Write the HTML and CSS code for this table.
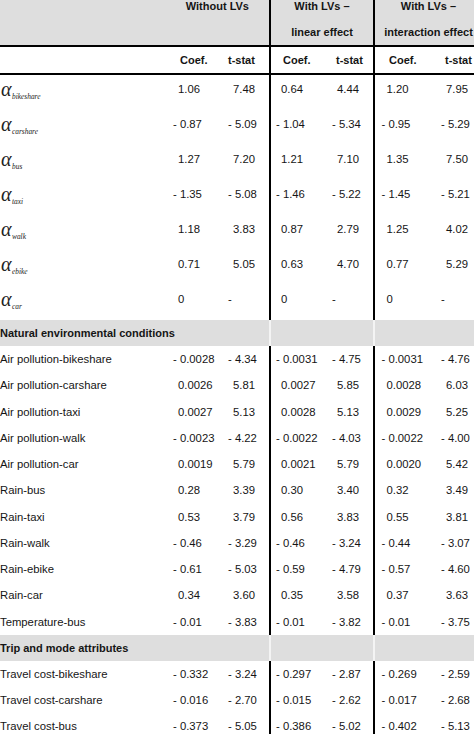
FILE: index.html
```html
<!DOCTYPE html>
<html>
<head>
<meta charset="utf-8">
<link rel="stylesheet" href="styles.css">
</head>
<body>
<div class="table">
  <div class="row head">
    <div class="lab"></div>
    <div class="h1"><div class="htext">Without LVs</div></div>
    <div class="h2"><div class="htext">With LVs –<br>linear effect</div></div>
    <div class="h3"><div class="htext">With LVs –<br>interaction effect</div></div>
  </div>
  <div class="row sub">
    <div class="lab"></div>
    <div class="c1 hc">Coef.</div><div class="t1 ht">t-stat</div>
    <div class="c2 hc">Coef.</div><div class="t2 ht">t-stat</div>
    <div class="c3 hc">Coef.</div><div class="t3 ht">t-stat</div>
  </div>

  <div class="row alpha">
    <div class="lab"><span class="al">α</span><sub>bikeshare</sub></div>
    <div class="c1">1.06</div><div class="t1">7.48</div>
    <div class="c2">0.64</div><div class="t2">4.44</div>
    <div class="c3">1.20</div><div class="t3">7.95</div>
  </div>
  <div class="row alpha">
    <div class="lab"><span class="al">α</span><sub>carshare</sub></div>
    <div class="c1"><span class="neg">- 0.87</span></div><div class="t1"><span class="neg">- 5.09</span></div>
    <div class="c2"><span class="neg">- 1.04</span></div><div class="t2"><span class="neg">- 5.34</span></div>
    <div class="c3"><span class="neg">- 0.95</span></div><div class="t3"><span class="neg">- 5.29</span></div>
  </div>
  <div class="row alpha">
    <div class="lab"><span class="al">α</span><sub>bus</sub></div>
    <div class="c1">1.27</div><div class="t1">7.20</div>
    <div class="c2">1.21</div><div class="t2">7.10</div>
    <div class="c3">1.35</div><div class="t3">7.50</div>
  </div>
  <div class="row alpha">
    <div class="lab"><span class="al">α</span><sub>taxi</sub></div>
    <div class="c1"><span class="neg">- 1.35</span></div><div class="t1"><span class="neg">- 5.08</span></div>
    <div class="c2"><span class="neg">- 1.46</span></div><div class="t2"><span class="neg">- 5.22</span></div>
    <div class="c3"><span class="neg">- 1.45</span></div><div class="t3"><span class="neg">- 5.21</span></div>
  </div>
  <div class="row alpha">
    <div class="lab"><span class="al">α</span><sub>walk</sub></div>
    <div class="c1">1.18</div><div class="t1">3.83</div>
    <div class="c2">0.87</div><div class="t2">2.79</div>
    <div class="c3">1.25</div><div class="t3">4.02</div>
  </div>
  <div class="row alpha">
    <div class="lab"><span class="al">α</span><sub>ebike</sub></div>
    <div class="c1">0.71</div><div class="t1">5.05</div>
    <div class="c2">0.63</div><div class="t2">4.70</div>
    <div class="c3">0.77</div><div class="t3">5.29</div>
  </div>
  <div class="row alpha">
    <div class="lab"><span class="al">α</span><sub>car</sub></div>
    <div class="c1">0</div><div class="t1"><span class="neg">-</span></div>
    <div class="c2">0</div><div class="t2"><span class="neg">-</span></div>
    <div class="c3">0</div><div class="t3"><span class="neg">-</span></div>
  </div>

  <div class="row band">
    <div class="blab">Natural environmental conditions</div>
    <div class="b2"></div><div class="b3"></div>
  </div>

  <div class="row">
    <div class="lab">Air pollution-bikeshare</div>
    <div class="c1"><span class="neg">- 0.0028</span></div><div class="t1"><span class="neg">- 4.34</span></div>
    <div class="c2"><span class="neg">- 0.0031</span></div><div class="t2"><span class="neg">- 4.75</span></div>
    <div class="c3"><span class="neg">- 0.0031</span></div><div class="t3"><span class="neg">- 4.76</span></div>
  </div>
  <div class="row">
    <div class="lab">Air pollution-carshare</div>
    <div class="c1">0.0026</div><div class="t1">5.81</div>
    <div class="c2">0.0027</div><div class="t2">5.85</div>
    <div class="c3">0.0028</div><div class="t3">6.03</div>
  </div>
  <div class="row">
    <div class="lab">Air pollution-taxi</div>
    <div class="c1">0.0027</div><div class="t1">5.13</div>
    <div class="c2">0.0028</div><div class="t2">5.13</div>
    <div class="c3">0.0029</div><div class="t3">5.25</div>
  </div>
  <div class="row">
    <div class="lab">Air pollution-walk</div>
    <div class="c1"><span class="neg">- 0.0023</span></div><div class="t1"><span class="neg">- 4.22</span></div>
    <div class="c2"><span class="neg">- 0.0022</span></div><div class="t2"><span class="neg">- 4.03</span></div>
    <div class="c3"><span class="neg">- 0.0022</span></div><div class="t3"><span class="neg">- 4.00</span></div>
  </div>
  <div class="row">
    <div class="lab">Air pollution-car</div>
    <div class="c1">0.0019</div><div class="t1">5.79</div>
    <div class="c2">0.0021</div><div class="t2">5.79</div>
    <div class="c3">0.0020</div><div class="t3">5.42</div>
  </div>
  <div class="row">
    <div class="lab">Rain-bus</div>
    <div class="c1">0.28</div><div class="t1">3.39</div>
    <div class="c2">0.30</div><div class="t2">3.40</div>
    <div class="c3">0.32</div><div class="t3">3.49</div>
  </div>
  <div class="row">
    <div class="lab">Rain-taxi</div>
    <div class="c1">0.53</div><div class="t1">3.79</div>
    <div class="c2">0.56</div><div class="t2">3.83</div>
    <div class="c3">0.55</div><div class="t3">3.81</div>
  </div>
  <div class="row">
    <div class="lab">Rain-walk</div>
    <div class="c1"><span class="neg">- 0.46</span></div><div class="t1"><span class="neg">- 3.29</span></div>
    <div class="c2"><span class="neg">- 0.46</span></div><div class="t2"><span class="neg">- 3.24</span></div>
    <div class="c3"><span class="neg">- 0.44</span></div><div class="t3"><span class="neg">- 3.07</span></div>
  </div>
  <div class="row">
    <div class="lab">Rain-ebike</div>
    <div class="c1"><span class="neg">- 0.61</span></div><div class="t1"><span class="neg">- 5.03</span></div>
    <div class="c2"><span class="neg">- 0.59</span></div><div class="t2"><span class="neg">- 4.79</span></div>
    <div class="c3"><span class="neg">- 0.57</span></div><div class="t3"><span class="neg">- 4.60</span></div>
  </div>
  <div class="row">
    <div class="lab">Rain-car</div>
    <div class="c1">0.34</div><div class="t1">3.60</div>
    <div class="c2">0.35</div><div class="t2">3.58</div>
    <div class="c3">0.37</div><div class="t3">3.63</div>
  </div>
  <div class="row">
    <div class="lab">Temperature-bus</div>
    <div class="c1"><span class="neg">- 0.01</span></div><div class="t1"><span class="neg">- 3.83</span></div>
    <div class="c2"><span class="neg">- 0.01</span></div><div class="t2"><span class="neg">- 3.82</span></div>
    <div class="c3"><span class="neg">- 0.01</span></div><div class="t3"><span class="neg">- 3.75</span></div>
  </div>

  <div class="row band">
    <div class="blab">Trip and mode attributes</div>
    <div class="b2"></div><div class="b3"></div>
  </div>

  <div class="row">
    <div class="lab">Travel cost-bikeshare</div>
    <div class="c1"><span class="neg">- 0.332</span></div><div class="t1"><span class="neg">- 3.24</span></div>
    <div class="c2"><span class="neg">- 0.297</span></div><div class="t2"><span class="neg">- 2.87</span></div>
    <div class="c3"><span class="neg">- 0.269</span></div><div class="t3"><span class="neg">- 2.59</span></div>
  </div>
  <div class="row">
    <div class="lab">Travel cost-carshare</div>
    <div class="c1"><span class="neg">- 0.016</span></div><div class="t1"><span class="neg">- 2.70</span></div>
    <div class="c2"><span class="neg">- 0.015</span></div><div class="t2"><span class="neg">- 2.62</span></div>
    <div class="c3"><span class="neg">- 0.017</span></div><div class="t3"><span class="neg">- 2.68</span></div>
  </div>
  <div class="row">
    <div class="lab">Travel cost-bus</div>
    <div class="c1"><span class="neg">- 0.373</span></div><div class="t1"><span class="neg">- 5.05</span></div>
    <div class="c2"><span class="neg">- 0.386</span></div><div class="t2"><span class="neg">- 5.02</span></div>
    <div class="c3"><span class="neg">- 0.402</span></div><div class="t3"><span class="neg">- 5.13</span></div>
  </div>
</div>
</body>
</html>
```
FILE: styles.css
```css
html, body {
  margin: 0;
  padding: 0;
  overflow: hidden;
  background: #fff;
}
body {
  font-family: "Liberation Sans", Arial, sans-serif;
  font-size: 11.3px;
  color: #151515;
}
.table {
  width: 482px;
}
.row {
  display: grid;
  grid-template-columns: 170px 56px 43px 61px 43px 66px 43px;
  height: 26.27px;
  line-height: 26.27px;
  box-sizing: border-box;
  white-space: nowrap;
}
.lab { padding-left: 0; }
.c1 { padding-left: 8px; }
.t1 { padding-left: 7px; }
.c2 { padding-left: 10px; border-left: 2px solid #000; }
.t2 { padding-left: 7px; }
.c3 { padding-left: 11.5px; border-left: 2px solid #000; }
.t3 { padding-left: 7px; }
.neg { margin-left: -5px; }

.head {
  height: 47px;
  background: #dedede;
  border-bottom: 2px solid #000;
  font-weight: bold;
  font-size: 11px;
  line-height: 26px;
}
.htext { margin-top: -7px; }
.h1 { grid-column: 2 / 4; text-align: right; padding-right: 20px; }
.h2 { grid-column: 4 / 6; text-align: center; border-left: 2px solid #000; }
.h3 { grid-column: 6 / 8; text-align: center; border-left: 2px solid #000; }

.sub {
  height: 28px;
  line-height: 26px;
  border-bottom: 2px solid #000;
  font-weight: bold;
  font-size: 11px;
}
.sub .hc { padding-left: 10px; }
.sub .c2.hc { padding-left: 12px; }
.sub .c3.hc { padding-left: 14px; }
.sub .ht { padding-left: 2px; }
.sub .t2.ht, .sub .t3.ht { padding-left: 6px; }

.alpha {
  height: 35px;
  line-height: 13px;
}
.alpha > div { padding-top: 8px; }
.alpha .lab {
  padding-top: 3px;
  padding-left: 1px;
  font-family: "Liberation Serif", "Times New Roman", serif;
  font-style: italic;
  line-height: 22px;
  color: #222;
}
.al { font-size: 20px; }
.alpha sub {
  font-size: 7.4px;
  vertical-align: -3px;
  line-height: 0;
  margin-left: 0.5px;
}

.band {
  background: #dedede;
  height: 26px;
  line-height: 26px;
  font-weight: bold;
  font-size: 11px;
}
.blab { grid-column: 1 / 4; }
.b2 { grid-column: 4 / 6; border-left: 2px solid #f4f4f4; }
.b3 { grid-column: 6 / 8; border-left: 2px solid #f4f4f4; }
```
